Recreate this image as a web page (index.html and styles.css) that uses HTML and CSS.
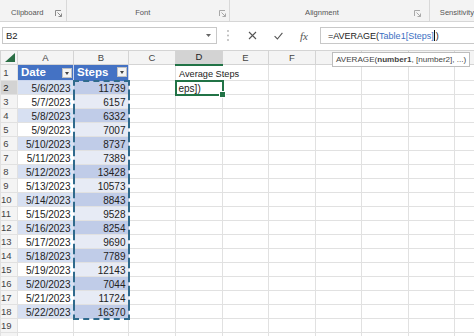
FILE: index.html
```html
<!DOCTYPE html>
<html lang="en">
<head>
    <meta charset="UTF-8">
    <title>Average Steps</title>
    <link rel="stylesheet" href="styles.css">
</head>
<body>
    <div class="ribbon">
        <div class="group g-clip">
            <span class="label">Clipboard</span>
            <svg class="launcher" width="7" height="7" viewBox="0 0 7 7"><path d="M0.5 6V0.5H6M2.5 2.5L6.5 6.5M6.5 3.5V6.5H3.5" fill="none" stroke="#8a8a8a" stroke-width="1"/></svg>
        </div>
        <div class="group g-font">
            <span class="label">Font</span>
            <svg class="launcher" width="7" height="7" viewBox="0 0 7 7"><path d="M0.5 6V0.5H6M2.5 2.5L6.5 6.5M6.5 3.5V6.5H3.5" fill="none" stroke="#a8a8a8" stroke-width="1"/></svg>
        </div>
        <div class="group g-align">
            <span class="label">Alignment</span>
            <svg class="launcher" width="7" height="7" viewBox="0 0 7 7"><path d="M0.5 6V0.5H6M2.5 2.5L6.5 6.5M6.5 3.5V6.5H3.5" fill="none" stroke="#a8a8a8" stroke-width="1"/></svg>
        </div>
        <div class="group g-sens">
            <span class="label">Sensitivity</span>
        </div>
    </div>

    <div class="formula-bar">
        <div class="name-box">
            <span>B2</span>
            <svg width="5" height="3" viewBox="0 0 5 3"><path d="M0 0h5L2.5 3z" fill="#666"/></svg>
        </div>
        <div class="fb-grip">
            <svg width="2" height="11" viewBox="0 0 2 11"><circle cx="1" cy="1" r="0.9" fill="#b0b0b0"/><circle cx="1" cy="5.5" r="0.9" fill="#b0b0b0"/><circle cx="1" cy="10" r="0.9" fill="#b0b0b0"/></svg>
        </div>
        <div class="fb-buttons">
            <span class="fb-btn"><svg width="9" height="9" viewBox="0 0 9 9"><path d="M1 1l7 7M8 1L1 8" stroke="#555" stroke-width="1.1"/></svg></span>
            <span class="fb-btn"><svg width="9" height="8" viewBox="0 0 9 8"><path d="M0.6 4.2l2.8 2.8L8.4 0.8" fill="none" stroke="#555" stroke-width="1.1"/></svg></span>
            <span class="fb-btn fx">fx</span>
        </div>
        <div class="formula">=AVERAGE(<span class="ref">Table1[Steps]</span><span class="caret"></span>)</div>
    </div>

    <div class="grid-wrap">
        <table class="sheet">
            <colgroup>
                <col style="width:17px"><col style="width:56px"><col style="width:55px"><col style="width:47px"><col style="width:47px">
                <col style="width:46px"><col style="width:47px"><col style="width:46px"><col style="width:47px"><col style="width:46px"><col style="width:47px">
            </colgroup>
            <tr class="col-heads">
                <th class="corner"><svg width="10" height="9" viewBox="0 0 10 9"><path d="M10 0V9H0z" fill="#2a6e45"/></svg></th>
                <th>A</th><th>B</th><th>C</th><th class="cur">D</th><th>E</th><th>F</th><th></th><th></th><th></th><th></th>
            </tr>
            <tr class="r1">
                <th class="rh">1</th>
                <td class="hd"><div class="hd-in"><span>Date</span><span class="filter"></span></div></td>
                <td class="hd"><div class="hd-in"><span>Steps</span><span class="filter"></span></div></td>
                <td></td><td class="txt over">Average Steps</td><td></td><td></td><td></td><td></td><td></td><td></td>
            </tr>
            <tr class="band">
                <th class="rh cur">2</th><td class="a">5/6/2023</td><td class="b top">11739</td>
                <td></td><td class="txt active">eps])</td><td></td><td></td><td></td><td></td><td></td><td></td>
            </tr>
            <tr>
                <th class="rh">3</th><td class="a">5/7/2023</td><td class="b">6157</td>
                <td></td><td></td><td></td><td></td><td></td><td></td><td></td><td></td>
            </tr>
            <tr class="band">
                <th class="rh">4</th><td class="a">5/8/2023</td><td class="b">6332</td>
                <td></td><td></td><td></td><td></td><td></td><td></td><td></td><td></td>
            </tr>
            <tr>
                <th class="rh">5</th><td class="a">5/9/2023</td><td class="b">7007</td>
                <td></td><td></td><td></td><td></td><td></td><td></td><td></td><td></td>
            </tr>
            <tr class="band">
                <th class="rh">6</th><td class="a">5/10/2023</td><td class="b">8737</td>
                <td></td><td></td><td></td><td></td><td></td><td></td><td></td><td></td>
            </tr>
            <tr>
                <th class="rh">7</th><td class="a">5/11/2023</td><td class="b">7389</td>
                <td></td><td></td><td></td><td></td><td></td><td></td><td></td><td></td>
            </tr>
            <tr class="band">
                <th class="rh">8</th><td class="a">5/12/2023</td><td class="b">13428</td>
                <td></td><td></td><td></td><td></td><td></td><td></td><td></td><td></td>
            </tr>
            <tr>
                <th class="rh">9</th><td class="a">5/13/2023</td><td class="b">10573</td>
                <td></td><td></td><td></td><td></td><td></td><td></td><td></td><td></td>
            </tr>
            <tr class="band">
                <th class="rh">10</th><td class="a">5/14/2023</td><td class="b">8843</td>
                <td></td><td></td><td></td><td></td><td></td><td></td><td></td><td></td>
            </tr>
            <tr>
                <th class="rh">11</th><td class="a">5/15/2023</td><td class="b">9528</td>
                <td></td><td></td><td></td><td></td><td></td><td></td><td></td><td></td>
            </tr>
            <tr class="band">
                <th class="rh">12</th><td class="a">5/16/2023</td><td class="b">8254</td>
                <td></td><td></td><td></td><td></td><td></td><td></td><td></td><td></td>
            </tr>
            <tr>
                <th class="rh">13</th><td class="a">5/17/2023</td><td class="b">9690</td>
                <td></td><td></td><td></td><td></td><td></td><td></td><td></td><td></td>
            </tr>
            <tr class="band">
                <th class="rh">14</th><td class="a">5/18/2023</td><td class="b">7789</td>
                <td></td><td></td><td></td><td></td><td></td><td></td><td></td><td></td>
            </tr>
            <tr>
                <th class="rh">15</th><td class="a">5/19/2023</td><td class="b">12143</td>
                <td></td><td></td><td></td><td></td><td></td><td></td><td></td><td></td>
            </tr>
            <tr class="band">
                <th class="rh">16</th><td class="a">5/20/2023</td><td class="b">7044</td>
                <td></td><td></td><td></td><td></td><td></td><td></td><td></td><td></td>
            </tr>
            <tr>
                <th class="rh">17</th><td class="a">5/21/2023</td><td class="b">11724</td>
                <td></td><td></td><td></td><td></td><td></td><td></td><td></td><td></td>
            </tr>
            <tr class="band">
                <th class="rh">18</th><td class="a">5/22/2023</td><td class="b bottom">16370</td>
                <td></td><td></td><td></td><td></td><td></td><td></td><td></td><td></td>
            </tr>
            <tr>
                <th class="rh">19</th><td></td><td></td>
                <td></td><td></td><td></td><td></td><td></td><td></td><td></td><td></td>
            </tr>
            <tr>
                <th class="rh"></th><td></td><td></td>
                <td></td><td></td><td></td><td></td><td></td><td></td><td></td><td></td>
            </tr>
        </table>
        <div class="tooltip">AVERAGE(<b>number1</b>, [number2], ...)</div>
    </div>
</body>
</html>
```

FILE: styles.css
```css
* {
    box-sizing: border-box;
}

:root {
    --excel-green: #217346;
    --table-blue: #4472c4;
    --grid-line: #e1e1e1;
    --head-line: #d4d4d4;
    --ant-color: #2f6a8c;
}

html, body {
    margin: 0;
    padding: 0;
}

body {
    width: 474px;
    height: 336px;
    overflow: hidden;
    background-color: #fff;
    font-family: "Liberation Sans", Arial, sans-serif;
    color: #222;
}

/* ribbon strip */
.ribbon {
    display: flex;
    height: 22px;
    background-color: #f3f3f3;
    border-bottom: 1px solid #d6d6d6;
}

.group {
    display: flex;
    align-items: flex-end;
    padding-bottom: 3px;
    border-right: 1px solid #d8d8d8;
}

.group .label {
    flex: 1;
    text-align: center;
    font-size: 7.6px;
    line-height: 10px;
    color: #555;
}

.launcher {
    margin-bottom: 1px;
}

.g-clip { width: 68px; }
.g-clip .launcher { margin-right: 4px; }

.g-font { width: 167px; }
.g-font .launcher { margin-right: 3px; }

.g-align { width: 204px; }
.g-align .launcher { margin-right: 8px; }

.g-sens {
    flex: 1;
    border-right: none;
    padding-left: 10px;
}

.g-sens .label {
    text-align: left;
    white-space: nowrap;
}

/* formula bar */
.formula-bar {
    display: flex;
    height: 17px;
    margin-top: 5px;
}

.name-box {
    display: flex;
    align-items: center;
    justify-content: space-between;
    width: 215px;
    margin-left: 2px;
    padding: 0 5px 0 3px;
    background-color: #fff;
    border: 1px solid #c8c8c8;
    font-size: 9.5px;
}

.fb-grip {
    display: flex;
    align-items: center;
    justify-content: center;
    width: 22px;
}

.fb-buttons {
    display: flex;
    width: 81px;
}

.fb-btn {
    display: flex;
    align-items: center;
    justify-content: center;
    width: 26px;
}

.fx {
    font-family: "Liberation Serif", "Times New Roman", serif;
    font-style: italic;
    font-size: 11px;
    color: #555;
}

.formula {
    flex: 1;
    display: flex;
    align-items: center;
    padding-left: 7px;
    background-color: #fff;
    border: 1px solid #c8c8c8;
    border-right: none;
    font-size: 9px;
    white-space: nowrap;
}

.formula .ref {
    color: #3b6fc2;
}

.formula .caret {
    display: inline-block;
    width: 1px;
    height: 11px;
    margin: 0 0.5px;
    background-color: #111;
}

/* sheet */
.grid-wrap {
    position: relative;
    margin-top: 6px;
}

.sheet {
    width: 501px;
    table-layout: fixed;
    border-collapse: collapse;
}

.sheet tr {
    height: 14px;
}

.sheet tr.r1 {
    height: 16px;
}

.sheet th, .sheet td {
    padding: 0;
    border: 1px solid var(--grid-line);
    overflow: visible;
    white-space: nowrap;
}

.col-heads th {
    background-color: #f4f4f4;
    border-color: var(--head-line);
    font-size: 9.5px;
    font-weight: normal;
    color: #444;
    text-align: center;
    line-height: 12px;
}

.col-heads th.cur {
    background-color: #d3d3d3;
    border-bottom: 2px solid var(--excel-green);
    color: #222;
}

.col-heads th.corner {
    vertical-align: bottom;
    padding: 0 2px 2px 0;
}

.corner svg {
    display: block;
    margin-left: auto;
}

.rh {
    background-color: #f4f4f4;
    border-color: var(--head-line);
    font-size: 9.5px;
    font-weight: normal;
    color: #444;
    text-align: center;
    padding-right: 6px !important;
    line-height: 12px;
}

.rh.cur {
    background-color: #d3d3d3;
    color: #222;
}

.sheet td {
    font-size: 10px;
    line-height: 10px;
    vertical-align: bottom;
}

/* table header row */
.sheet td.hd {
    background-color: var(--table-blue);
    border-color: #c9d5ee;
    color: #fff;
    vertical-align: middle;
}

.hd-in {
    display: flex;
    align-items: center;
    justify-content: space-between;
    padding: 0 1px 0 3px;
    font-size: 11.5px;
    font-weight: bold;
    line-height: 13px;
}

.filter {
    position: relative;
    width: 10px;
    height: 10px;
    background-color: #f4f4f4;
    border: 1px solid #c2c2c2;
}

.filter::after {
    content: "";
    position: absolute;
    left: 2px;
    top: 3px;
    border-left: 2.5px solid transparent;
    border-right: 2.5px solid transparent;
    border-top: 3px solid #444;
}

/* table body */
.sheet td.a, .sheet td.b {
    text-align: right;
    padding-right: 2px;
}

.band td.a {
    background-color: #d7e0f2;
}

.sheet td.b {
    background-color: #e7ebf5;
    border-left: 2px dashed var(--ant-color);
    border-right: 2px dashed var(--ant-color);
}

.band td.b {
    background-color: #c0cce8;
}

.sheet td.b.top {
    border-top: 2px dashed var(--ant-color);
}

.sheet td.b.bottom {
    border-bottom: 2px dashed var(--ant-color);
}

.sheet td.txt {
    padding-left: 3px;
}

.sheet td.over {
    border-right-color: #fff;
    padding-bottom: 1px;
    font-size: 9.2px;
}

.sheet td.active {
    position: relative;
    border: 2px solid var(--excel-green);
    padding-left: 2px;
}

.sheet td.active::after {
    content: "";
    position: absolute;
    right: -4px;
    bottom: -4px;
    width: 5px;
    height: 5px;
    background-color: var(--excel-green);
    border: 1px solid #fff;
}

/* function tooltip */
.tooltip {
    position: absolute;
    top: 2px;
    left: 332px;
    height: 15px;
    padding: 0 3px;
    background-color: #fff;
    border: 1px solid #bdbdbd;
    font-size: 8.1px;
    line-height: 13px;
    color: #444;
    white-space: nowrap;
}
```
